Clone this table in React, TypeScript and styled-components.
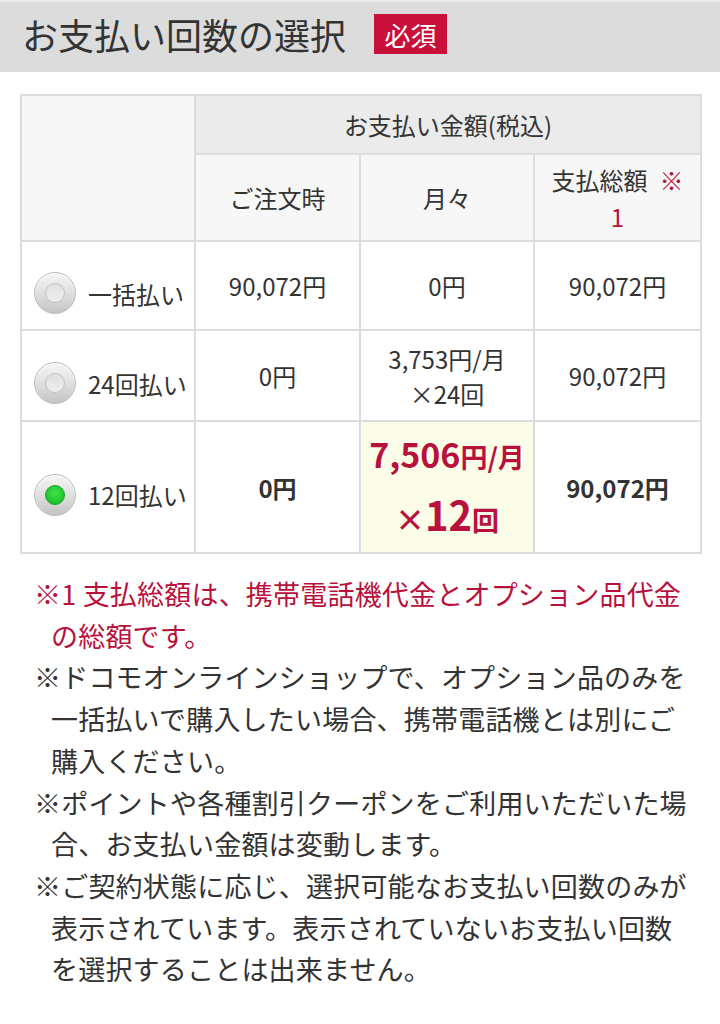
import React from "react";
import styled, { createGlobalStyle } from "styled-components";

const GlobalStyle = createGlobalStyle`
  html, body { margin: 0; padding: 0; background: #ffffff; }
  body {
    font-family: "Noto Sans CJK JP", "Noto Sans", sans-serif;
    color: #333333;
  }
`;

const RED = "#b8123c";
const BORDER = "#dcdcdc";

const Header = styled.header`
  box-sizing: border-box;
  height: 72px;
  background: #dcdcdc;
  border-top: 2px solid #ebebeb;
  display: flex;
  align-items: center;
  gap: 28px;
  padding: 0 0 6px 22px;
`;

const Title = styled.h1`
  margin: 0;
  font-size: 36px;
  line-height: 1;
  font-weight: 400;
  color: #333333;
`;

const Badge = styled.span`
  width: 73px;
  height: 40px;
  background: #c8103b;
  color: #ffffff;
  font-size: 26px;
  display: flex;
  align-items: center;
  justify-content: center;
`;

const TableWrap = styled.div`
  padding: 22px 20px 0 20px;
`;

const Table = styled.table`
  width: 680px;
  border-collapse: collapse;
  table-layout: fixed;
  border: 2px solid ${BORDER};
`;

const Row = styled.tr<{ $h: number }>`
  height: ${(p) => p.$h}px;
`;

const Cell = styled.td<{ $bg?: string; $bold?: boolean }>`
  border: 2px solid ${BORDER};
  text-align: center;
  vertical-align: middle;
  font-size: 24px;
  line-height: 35px;
  padding: 0 6px;
  color: #333333;
  background: ${(p) => p.$bg ?? "#ffffff"};
  font-weight: ${(p) => (p.$bold ? 700 : 400)};
`;

const HeadCell = styled.th<{ $bg: string }>`
  border: 2px solid ${BORDER};
  text-align: center;
  vertical-align: middle;
  font-size: 24px;
  line-height: 37px;
  font-weight: 400;
  padding: 0 6px;
  color: #333333;
  background: ${(p) => p.$bg};
`;

const Red = styled.span`
  color: ${RED};
`;

const Gap = styled.span`
  display: inline-block;
  width: 12px;
`;

const OptionCell = styled.td`
  border: 2px solid ${BORDER};
  vertical-align: middle;
  padding: 15px 0 0 12px;
  background: #ffffff;
`;

const Option = styled.label`
  display: flex;
  align-items: center;
  gap: 12px;
  font-size: 24px;
  color: #333333;
  white-space: nowrap;
`;

const Radio = styled.span<{ $checked?: boolean }>`
  box-sizing: border-box;
  flex: none;
  width: 42px;
  height: 42px;
  border-radius: 50%;
  border: 1px solid #bdbdbd;
  background: linear-gradient(#f6f6f6, #e2e2e2 45%, #c4c4c4);
  box-shadow: inset 0 1px 1px rgba(255, 255, 255, 0.9);
  display: flex;
  align-items: center;
  justify-content: center;

  &::after {
    content: "";
    width: 20px;
    height: 20px;
    border-radius: 50%;
    box-sizing: border-box;
    background: ${(p) =>
      p.$checked
        ? "radial-gradient(circle at 50% 40%, #3ee04a, #1fc42c 70%)"
        : "linear-gradient(#e0e0e0, #eeeeee)"};
    border: 1px solid ${(p) => (p.$checked ? "#1aa126" : "#c2c2c2")};
  }
`;

const Highlight = styled.div`
  color: ${RED};
  font-weight: 700;
  line-height: 56px;
  white-space: nowrap;
`;

const BigNum = styled.span<{ $size: number }>`
  font-size: ${(p) => p.$size}px;
`;

const Unit = styled.span`
  font-size: 27px;
`;

const Notes = styled.ul`
  list-style: none;
  margin: 19px 0 0 0;
  padding: 0 28px 0 51px;
`;

const Note = styled.li<{ $red?: boolean }>`
  font-size: 27px;
  letter-spacing: 0.2px;
  line-height: 41.7px;
  text-indent: -17px;
  color: ${(p) => (p.$red ? RED : "#333333")};
`;

export default function App() {
  return (
    <>
      <GlobalStyle />
      <Header>
        <Title>お支払い回数の選択</Title>
        <Badge>必須</Badge>
      </Header>

      <TableWrap>
        <Table>
          <colgroup>
            <col style={{ width: 174 }} />
            <col style={{ width: 165 }} />
            <col style={{ width: 174 }} />
            <col style={{ width: 167 }} />
          </colgroup>
          <thead>
            <Row $h={59}>
              <HeadCell $bg="#f7f7f7" rowSpan={2} />
              <HeadCell $bg="#ebebeb" colSpan={3}>
                お支払い金額(税込)
              </HeadCell>
            </Row>
            <Row $h={87}>
              <HeadCell $bg="#f7f7f7">ご注文時</HeadCell>
              <HeadCell $bg="#f7f7f7">月々</HeadCell>
              <HeadCell $bg="#f7f7f7">
                支払総額
                <Gap />
                <Red>※</Red>
                <br />
                <Red>1</Red>
              </HeadCell>
            </Row>
          </thead>
          <tbody>
            <Row $h={89}>
              <OptionCell>
                <Option>
                  <Radio />
                  一括払い
                </Option>
              </OptionCell>
              <Cell>90,072円</Cell>
              <Cell>0円</Cell>
              <Cell>90,072円</Cell>
            </Row>
            <Row $h={91}>
              <OptionCell>
                <Option>
                  <Radio />
                  24回払い
                </Option>
              </OptionCell>
              <Cell>0円</Cell>
              <Cell>
                3,753円/月
                <br />
                ×24回
              </Cell>
              <Cell>90,072円</Cell>
            </Row>
            <Row $h={132}>
              <OptionCell>
                <Option>
                  <Radio $checked />
                  12回払い
                </Option>
              </OptionCell>
              <Cell $bold>0円</Cell>
              <Cell $bg="#fcfde8">
                <Highlight>
                  <BigNum $size={34}>7,506</BigNum>
                  <Unit>円/月</Unit>
                  <br />
                  <BigNum $size={30}>×</BigNum>
                  <BigNum $size={40}>12</BigNum>
                  <Unit>回</Unit>
                </Highlight>
              </Cell>
              <Cell $bold>90,072円</Cell>
            </Row>
          </tbody>
        </Table>
      </TableWrap>

      <Notes>
        <Note $red>※1 支払総額は、携帯電話機代金とオプション品代金の総額です。</Note>
        <Note>
          ※ドコモオンラインショップで、オプション品のみを一括払いで購入したい場合、携帯電話機とは別にご購入ください。
        </Note>
        <Note>※ポイントや各種割引クーポンをご利用いただいた場合、お支払い金額は変動します。</Note>
        <Note>
          ※ご契約状態に応じ、選択可能なお支払い回数のみが表示されています。表示されていないお支払い回数を選択することは出来ません。
        </Note>
      </Notes>
    </>
  );
}
